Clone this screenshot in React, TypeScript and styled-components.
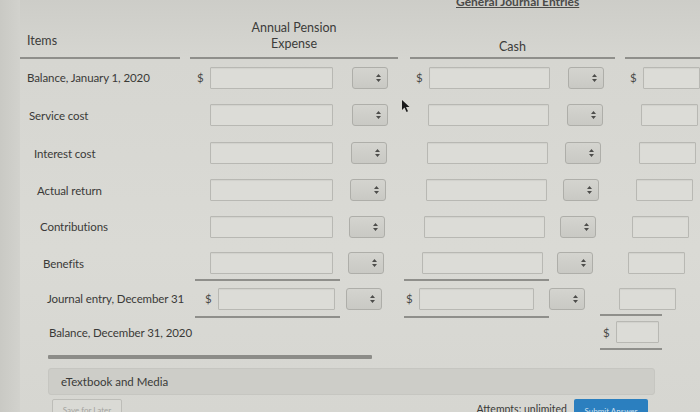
import React from 'react'
import styled, { createGlobalStyle, css } from 'styled-components'

const GlobalStyle = createGlobalStyle`
  html, body {
    margin: 0;
    padding: 0;
    background: #cfcfca;
  }
  body {
    font-family: Lato, 'Open Sans', sans-serif;
    color: #3a3a38;
  }
`

type Kind = 'dollar' | 'plain' | 'none'

type Row = {
  label: string
  indent: number // labels drift right towards the bottom of the photo
  skew: number // right-hand columns drift left towards the bottom
  height: number
  expense: Kind
  cash: Kind
  selects: boolean
  ruled: boolean
  last: Kind
  lastRuled: boolean
}

const rows: Row[] = [
  { label: 'Balance, January 1, 2020', indent: 0, skew: 0, height: 37, expense: 'dollar', cash: 'dollar', selects: true, ruled: false, last: 'dollar', lastRuled: false },
  { label: 'Service cost', indent: 2, skew: 2, height: 38, expense: 'plain', cash: 'plain', selects: true, ruled: false, last: 'plain', lastRuled: false },
  { label: 'Interest cost', indent: 7, skew: 4, height: 38, expense: 'plain', cash: 'plain', selects: true, ruled: false, last: 'plain', lastRuled: false },
  { label: 'Actual return', indent: 10, skew: 7, height: 36, expense: 'plain', cash: 'plain', selects: true, ruled: false, last: 'plain', lastRuled: false },
  { label: 'Contributions', indent: 13, skew: 11, height: 37, expense: 'plain', cash: 'plain', selects: true, ruled: false, last: 'plain', lastRuled: false },
  { label: 'Benefits', indent: 16, skew: 15, height: 36, expense: 'plain', cash: 'plain', selects: true, ruled: false, last: 'plain', lastRuled: false },
  { label: 'Journal entry, December 31', indent: 20, skew: 24, height: 35, expense: 'dollar', cash: 'dollar', selects: true, ruled: true, last: 'plain', lastRuled: false },
  { label: 'Balance, December 31, 2020', indent: 22, skew: 26, height: 32, expense: 'none', cash: 'none', selects: false, ruled: false, last: 'dollar', lastRuled: true }
]

const Screen = styled.div`
  width: 700px;
  height: 412px;
  overflow: hidden;
  position: relative;
  background: linear-gradient(90deg, #c9c9c4 0px, #d2d2cd 20px, #d2d2cd 680px, #c4c4bf 700px);
`

const Panel = styled.div`
  margin-left: 20px;
  width: 690px;
  height: 100%;
  background: linear-gradient(180deg, #cdcdc8 0px, #d6d6d1 60px, #dadad5 250px, #d6d6d1 412px);
  display: flex;
  flex-direction: column;

  & > * {
    flex-shrink: 0;
  }
`

const JournalTitle = styled.div`
  height: 10px;
  margin-top: -6px;
  padding-left: 436px;
  font-size: 12px;
  font-weight: 700;
  color: #4a4a48;
  text-decoration: underline;
  white-space: nowrap;
`

const HeaderRow = styled.div`
  display: flex;
  height: 51px;
  margin-top: 4px;
`

const HeadCell = styled.div<{ $w: number; $gap: number; $align?: string; $pb?: number }>`
  width: ${({ $w }) => $w}px;
  margin-right: ${({ $gap }) => $gap}px;
  flex: none;
  border-bottom: 2px solid #8f8f8b;
  display: flex;
  align-items: flex-end;
  justify-content: ${({ $align }) => $align || 'center'};
  padding-bottom: ${({ $pb }) => $pb ?? 5}px;
  box-sizing: border-box;
  font-size: 12.5px;
  line-height: 16px;
  color: #3c3c3a;
  text-align: center;
`

const ItemsHead = styled(HeadCell)`
  padding-left: 7px;
`

const TableRow = styled.div<{ $h: number }>`
  display: flex;
  height: ${({ $h }) => $h}px;
  align-items: stretch;
`

const Label = styled.div<{ $indent: number }>`
  width: 175px;
  flex: none;
  box-sizing: border-box;
  padding-left: ${({ $indent }) => 7 + $indent}px;
  display: flex;
  align-items: center;
  font-size: 11.5px;
  letter-spacing: -0.1px;
  color: #3a3a38;
  white-space: nowrap;
`

const AmountCell = styled.div<{ $w?: number; $pl: number; $ml: number; $ruled?: boolean }>`
  ${({ $w }) => ($w ? `width: ${$w}px; flex: none;` : 'flex: 1;')}
  margin-left: ${({ $ml }) => $ml}px;
  box-sizing: border-box;
  padding-left: ${({ $pl }) => $pl}px;
  display: flex;
  align-items: center;
  ${({ $ruled }) =>
    $ruled &&
    css`
      border-top: 2px solid #8f8f8b;
      border-bottom: 2px solid #8f8f8b;
      margin-top: -2px;
      margin-bottom: -2px;
    `}
`

const Dollar = styled.span`
  width: 13px;
  flex: none;
  font-size: 11.5px;
  color: #4a4a48;
`

const Field = styled.div<{ $w: number }>`
  width: ${({ $w }) => $w}px;
  height: 22px;
  flex: none;
  box-sizing: border-box;
  border: 1px solid #b8b8b3;
  border-radius: 1px;
  background: #dcdcd7;
  box-shadow: inset 0 1px 1px rgba(0, 0, 0, 0.05);
`

const SelectCell = styled.div<{ $w: number; $pl: number }>`
  width: ${({ $w }) => $w}px;
  flex: none;
  box-sizing: border-box;
  padding-left: ${({ $pl }) => $pl}px;
  display: flex;
  align-items: center;
`

const SelectBox = styled.div`
  width: 36px;
  height: 22px;
  box-sizing: border-box;
  border: 1px solid #aeaea9;
  border-radius: 3px;
  background: linear-gradient(180deg, #d4d4cf, #c9c9c4);
  display: flex;
  align-items: center;
  justify-content: flex-end;
  padding-right: 6px;
`

const Arrows = styled.svg`
  width: 5px;
  height: 8px;
  fill: #4d4d4b;
`

const Divider = styled.div`
  margin: 7px 0 0 28px;
  width: 324px;
  height: 4px;
  background: #8c8c88;
  border-radius: 1px;
`

const MediaBox = styled.div`
  margin: 9px 0 0 28px;
  width: 607px;
  height: 27px;
  box-sizing: border-box;
  padding-left: 12px;
  display: flex;
  align-items: center;
  background: #cdcdc8;
  border: 1px solid #c6c6c1;
  border-radius: 3px;
  font-size: 11.5px;
  color: #3a3a38;
`

const Footer = styled.div`
  display: flex;
  align-items: flex-start;
  margin-top: 4px;
  padding-left: 32px;
`

const SaveButton = styled.div`
  width: 70px;
  height: 20px;
  box-sizing: border-box;
  border: 1px solid #bdbdb8;
  border-radius: 2px;
  background: #dadad5;
  font-size: 8px;
  color: #a3a39f;
  text-align: center;
  padding-top: 5px;
`

const Attempts = styled.div`
  margin-left: auto;
  margin-top: 4px;
  font-size: 10.5px;
  color: #3a3a38;
  white-space: nowrap;
`

const SubmitButton = styled.div`
  margin: 0 62px 0 7px;
  width: 74px;
  height: 20px;
  box-sizing: border-box;
  border-radius: 2px;
  background: #2b7fbf;
  color: #cfe1ef;
  font-size: 8px;
  text-align: center;
  padding-top: 7px;
  white-space: nowrap;
`

const Pointer = styled.svg`
  position: absolute;
  left: 402px;
  top: 100px;
  width: 9px;
  height: 12px;
`

function UpDown() {
  return (
    <Arrows viewBox="0 0 5 8">
      <path d="M2.5 0 L5 3 L0 3 Z M0 5 L5 5 L2.5 8 Z" />
    </Arrows>
  )
}

type AmountProps = { kind: Kind; w?: number; pl: number; ml?: number; fw: number; ruled?: boolean }

function Amount({ kind, w, pl, ml = 0, fw, ruled }: AmountProps) {
  return (
    <AmountCell $w={w} $pl={pl} $ml={ml} $ruled={ruled}>
      {kind !== 'none' && <Dollar>{kind === 'dollar' ? '$' : ''}</Dollar>}
      {kind !== 'none' && <Field $w={fw} />}
    </AmountCell>
  )
}

function Select({ show, w, pl }: { show: boolean; w: number; pl: number }) {
  return (
    <SelectCell $w={w} $pl={pl}>
      {show && (
        <SelectBox>
          <UpDown />
        </SelectBox>
      )}
    </SelectCell>
  )
}

export default function App() {
  return (
    <>
      <GlobalStyle />
      <Screen>
        <Panel>
          <JournalTitle>General Journal Entries</JournalTitle>
          <HeaderRow>
            <ItemsHead $w={160} $gap={10} $align="flex-start" $pb={8}>
              Items
            </ItemsHead>
            <HeadCell $w={208} $gap={12} $pb={5}>
              <span>
                Annual Pension
                <br />
                Expense
              </span>
            </HeadCell>
            <HeadCell $w={205} $gap={10} $pb={2}>
              Cash
            </HeadCell>
            <HeadCell $w={75} $gap={0} />
          </HeaderRow>
          {rows.map((r) => (
            <TableRow key={r.label} $h={r.height}>
              <Label $indent={r.indent}>{r.label}</Label>
              <Amount kind={r.expense} w={145} pl={r.ruled ? 10 : 2} fw={r.ruled ? 117 : 123} ruled={r.ruled} />
              <Select show={r.selects} w={62} pl={12 - r.skew / 4} />
              <Amount
                kind={r.cash}
                w={r.ruled ? 145 : 150}
                ml={r.ruled ? 2 : 0}
                pl={14 - r.skew / 2}
                fw={r.ruled ? 115 : 121}
                ruled={r.ruled}
              />
              <Select show={r.selects} w={r.ruled ? 66 : 63} pl={16 - (r.skew * 3) / 4} />
              {r.lastRuled ? (
                <Amount kind={r.last} w={62} ml={-15} pl={3} fw={43} ruled />
              ) : (
                <Amount kind={r.last} ml={-r.skew} pl={15} fw={57} />
              )}
            </TableRow>
          ))}
          <Divider />
          <MediaBox>eTextbook and Media</MediaBox>
          <Footer>
            <SaveButton>Save for Later</SaveButton>
            <Attempts>Attempts: unlimited</Attempts>
            <SubmitButton>Submit Answer</SubmitButton>
          </Footer>
        </Panel>
        <Pointer viewBox="0 0 9 12">
          <path d="M0 0 L0 10 L2.5 7.5 L4.5 12 L6 11.3 L4 7 L7.5 7 Z" fill="#1a1a1a" />
        </Pointer>
      </Screen>
    </>
  )
}
